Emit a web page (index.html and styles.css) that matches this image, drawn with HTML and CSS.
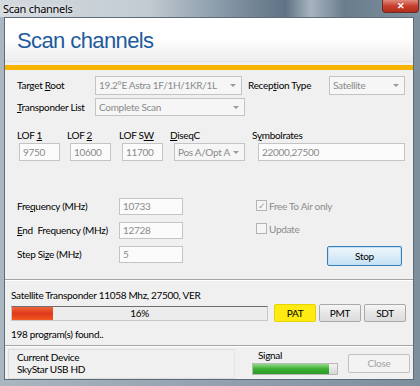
FILE: index.html
```html
<!DOCTYPE html>
<html>

<head>
	<title>Scan channels</title>
	<meta charset='utf-8' />
	<link rel="stylesheet" href="styles.css">
</head>

<body>
	<div class="window">
		<div class="titlebar">
			<span class="caption">Scan channels</span>
			<span class="closeX">&#x2715;</span>
		</div>
		<div class="client">
			<div class="banner">
				<h1>Scan channels</h1>
			</div>
			<div class="accent"></div>

			<div class="form">
				<div class="row r1">
					<span class="lbl w78">Target <u>R</u>oot</span>
					<div class="field sel w147">19.2°E Astra 1F/1H/1KR/1L</div>
					<span class="lbl rt">Recep<u>t</u>ion Type</span>
					<div class="field sel w76">Satellite</div>
				</div>
				<div class="row r2">
					<span class="lbl w78"><u>T</u>ransponder List</span>
					<div class="field sel w150">Complete Scan</div>
				</div>

				<div class="lofs">
					<div class="col c1">
						<span class="lbl">LOF <u>1</u></span>
						<div class="field">9750</div>
					</div>
					<div class="col c2">
						<span class="lbl">LOF <u>2</u></span>
						<div class="field">10600</div>
					</div>
					<div class="col c3">
						<span class="lbl">LOF S<u>W</u></span>
						<div class="field">11700</div>
					</div>
					<div class="col c4">
						<span class="lbl"><u>D</u>iseqC</span>
						<div class="field sel">Pos A/Opt A</div>
					</div>
					<div class="col c5">
						<span class="lbl">S<u>y</u>mbolrates</span>
						<div class="field">22000,27500</div>
					</div>
				</div>

				<div class="freqs">
					<div class="left">
						<div class="frow">
							<span class="lbl w102">Fre<u>q</u>uency (MHz)</span>
							<div class="field w64">10733</div>
						</div>
						<div class="frow">
							<span class="lbl w102"><u>E</u>nd&nbsp; Frequency (MHz)</span>
							<div class="field w64">12728</div>
						</div>
						<div class="frow">
							<span class="lbl w102">Step Si<u>z</u>e (MHz)</span>
							<div class="field w64">5</div>
						</div>
					</div>
					<div class="right">
						<div class="check"><span class="box on">&#x2713;</span>Free To Air only</div>
						<div class="check"><span class="box"></span>Update</div>
						<div class="btn stop">Stop</div>
					</div>
				</div>
			</div>

			<div class="status">
				<div class="transponder">Satellite Transponder 11058 Mhz, 27500, VER</div>
				<div class="progressRow">
					<div class="progress">
						<div class="fill" style="width: 16%"></div>
						<span class="pct">16%</span>
					</div>
					<div class="btn tab pat">PAT</div>
					<div class="btn tab">PMT</div>
					<div class="btn tab">SDT</div>
				</div>
				<div class="found">198 program(s) found..</div>
			</div>

			<div class="footer">
				<div class="device">
					<div>Current Device</div>
					<div>SkyStar USB HD</div>
				</div>
				<div class="signal">
					<span class="sigLabel">Signal</span>
					<div class="sigBar">
						<div class="sigFill" style="width: 91%"></div>
					</div>
				</div>
				<div class="btn close">Close</div>
			</div>
		</div>
	</div>
</body>

</html>
```

FILE: styles.css
```css
body {
	margin: 0;
	font-family: Lato, "Noto Sans", sans-serif;
	font-size: 10px;
	letter-spacing: -0.3px;
	color: #000;
}

.window {
	width: 420px;
	height: 386px;
	box-sizing: border-box;
	background: linear-gradient(to right, #aab6c0, #8e9eac 60%, #7d8e9c);
	padding: 0 6px 6px 4px;
	display: flex;
	flex-direction: column;
}

.titlebar {
	height: 19px;
	margin: 0 -6px 0 -4px;
	padding-left: 3px;
	display: flex;
	justify-content: space-between;
	align-items: flex-start;
	background: linear-gradient(to right, #d4dadf 0%, #c3ccd3 35%, #8193a2 55%, #5f7385 68%, #a7b4bf 74%, #6a7d8d 82%, #7f91a0 100%);
}

.caption {
	font-family: "Noto Sans", sans-serif;
	font-size: 11px;
	line-height: 17px;
	color: #000;
	text-shadow: 0 0 4px #fff;
}

.closeX {
	width: 35px;
	height: 12px;
	margin-right: 1px;
	background: linear-gradient(#e08b7c, #c7402e 50%, #b32d1c);
	border: 1px solid #6d2b22;
	border-top: 0;
	border-radius: 0 0 4px 4px;
	color: #fff;
	font-size: 9px;
	font-weight: bold;
	line-height: 11px;
	text-align: center;
	letter-spacing: 0;
}

.client {
	flex: 1;
	background: #f0f0f0;
	border: 1px solid #5d6c78;
	display: flex;
	flex-direction: column;
}

.banner {
	height: 43px;
	background: linear-gradient(#fff 45%, #eeeeee);
	border-bottom: 1px solid #e2e2e2;
}

.banner h1 {
	margin: 0;
	padding: 12px 0 0 12px;
	font-family: "Liberation Sans", Arial, sans-serif;
	font-weight: normal;
	font-size: 22px;
	line-height: 22px;
	letter-spacing: -0.6px;
	color: #1f5b9d;
}

.accent {
	height: 5px;
	margin-top: 3px;
	background: #f6b300;
}

.form {
	padding: 6px 0 0 12px;
	border-bottom: 1px solid #a5a5a5;
	padding-bottom: 13px;
}

.row {
	display: flex;
	align-items: center;
}

.r1 {
	height: 19px;
}

.r2 {
	height: 18px;
	margin-top: 3px;
}

.lbl {
	display: block;
	line-height: 13px;
	white-space: nowrap;
}

.w78 {
	width: 78px;
}

.w102 {
	width: 102px;
}

.rt {
	width: 81px;
	margin-left: 6px;
}

.field {
	height: 18px;
	box-sizing: border-box;
	border: 1px solid #c4c4c4;
	background: #fbfbfb;
	color: #8a8a8a;
	padding-left: 3px;
	line-height: 16px;
	white-space: nowrap;
	overflow: hidden;
	position: relative;
}

.sel {
	background: #f6f6f6;
	padding-right: 12px;
}

.sel::after {
	content: "";
	position: absolute;
	right: 5px;
	top: 7px;
	border-left: 3px solid transparent;
	border-right: 3px solid transparent;
	border-top: 3px solid #9a9a9a;
}

.r1 .field {
	height: 19px;
	line-height: 17px;
}

.w147 {
	width: 147px;
}

.w150 {
	width: 150px;
}

.w76 {
	width: 76px;
}

.w64 {
	width: 64px;
	height: 17px;
	line-height: 15px;
}

.lofs {
	display: flex;
	margin-top: 13px;
}

.col .field {
	margin-top: 1px;
}

.c1 {
	width: 50px;
}

.c1 .field {
	width: 41px;
	margin-left: 2px;
}

.c2 {
	width: 52px;
}

.c2 .field {
	width: 41px;
	margin-left: 3px;
}

.c3 {
	width: 51px;
}

.c3 .field {
	width: 41px;
	margin-left: 3px;
}

.c4 {
	width: 82px;
}

.c4 .field {
	width: 71px;
	margin-left: 4px;
}

.c5 .field {
	width: 147px;
	margin-left: 6px;
}

.freqs {
	display: flex;
	margin-top: 37px;
}

.left {
	width: 239px;
}

.frow {
	display: flex;
	align-items: center;
	margin-bottom: 7px;
}

.frow:last-child {
	margin-bottom: 0;
}

.right {
	padding-top: 2px;
}

.check {
	display: flex;
	align-items: center;
	height: 11px;
	color: #8c8c8c;
	margin-bottom: 12px;
}

.box {
	width: 9px;
	height: 9px;
	border: 1px solid #b3b3b3;
	background: #f5f5f5;
	margin-right: 2px;
	font-size: 9px;
	line-height: 9px;
	text-align: center;
	color: #9a9a9a;
	letter-spacing: 0;
}

.btn {
	box-sizing: border-box;
	border: 1px solid #a9a9a9;
	border-radius: 2px;
	background: linear-gradient(#f6f6f6, #e6e6e6 50%, #dcdcdc);
	text-align: center;
	white-space: nowrap;
}

.stop {
	width: 75px;
	height: 20px;
	margin: 11px 0 0 71px;
	line-height: 18px;
	border-color: #3a7fb3;
	background: linear-gradient(#eef6fc, #dcecf8 50%, #c5e1f5);
	box-shadow: inset 0 0 0 1px #bfe0f6;
}

.status {
	border-top: 1px solid #fff;
	padding: 8px 0 0 6px;
	border-bottom: 1px solid #a5a5a5;
	padding-bottom: 4px;
}

.transponder {
	line-height: 13px;
}

.progressRow {
	display: flex;
	align-items: center;
	margin-top: 2px;
	height: 18px;
}

.progress {
	width: 257px;
	height: 15px;
	box-sizing: border-box;
	border: 1px solid #c8c8c8;
	border-top-color: #6f6f6f;
	background: #ececec;
	position: relative;
	margin-right: 6px;
}

.fill {
	height: 100%;
	background: linear-gradient(#f0663a, #e0371a 50%, #f0581e);
}

.pct {
	position: absolute;
	left: 0;
	right: 0;
	top: 0;
	text-align: center;
	line-height: 13px;
}

.tab {
	width: 42px;
	height: 18px;
	line-height: 16px;
	margin-right: 3px;
}

.pat {
	background: #ffea12;
	border-color: #e6d400;
}

.found {
	margin-top: 6px;
	line-height: 13px;
}

.footer {
	border-top: 1px solid #fff;
	display: flex;
	align-items: flex-start;
	padding: 2px 0 0 3px;
}

.device {
	width: 227px;
	height: 30px;
	box-sizing: border-box;
	border: 1px solid #dcdcdc;
	border-right-color: #e6e6e6;
	padding: 1px 0 0 8px;
	line-height: 12px;
}

.signal {
	margin-left: 17px;
}

.sigLabel {
	display: block;
	margin-left: 6px;
	line-height: 12px;
}

.sigBar {
	width: 86px;
	height: 12px;
	box-sizing: border-box;
	border: 1px solid #b8b8b8;
	background: linear-gradient(#f4f4f4, #d6d6d6);
	margin-top: 2px;
}

.sigFill {
	height: 100%;
	background: linear-gradient(#8fdc83, #3cae33 50%, #2c9b26);
}

.close {
	width: 62px;
	height: 19px;
	line-height: 17px;
	margin: 5px 0 0 10px;
	color: #a4a4a4;
	background: #f3f3f3;
	border-color: #c2c2c2;
}
```
